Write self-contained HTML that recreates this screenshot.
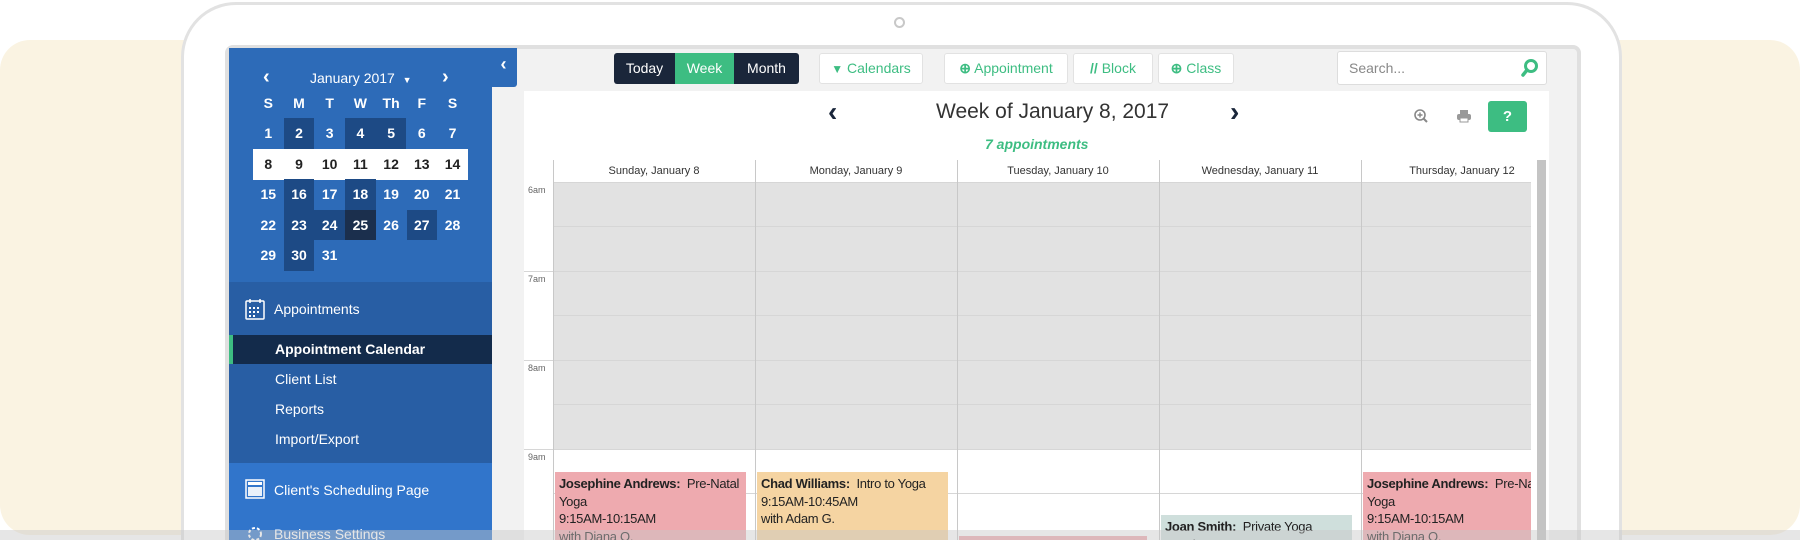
<!DOCTYPE html>
<html style="overflow:hidden;width:1800px;height:540px"><head><meta charset="utf-8"><style>
*{box-sizing:border-box;margin:0;padding:0}
html,body{width:1800px;height:540px;overflow:hidden}
body{background:#fff;font-family:"Liberation Sans",sans-serif;position:relative}
#wrap{position:absolute;left:0;top:0;width:1800px;height:540px;overflow:hidden}
.abs{position:absolute}
.cream{left:0;top:40px;width:1800px;height:495px;background:#faf3e2;border-radius:30px}
.laptop{left:181px;top:2px;width:1441px;height:538px;background:#fff;border:3px solid #e2e2e2;border-bottom:none;border-radius:55px 55px 0 0}
.cam{left:894px;top:17px;width:11px;height:11px;border:2px solid #c8c8c8;border-radius:50%}
.screen{left:225px;top:45px;width:1356px;height:495px;background:#f2f2f2;border:4px solid #e0e0e0;border-bottom:none;border-radius:8px 8px 0 0}
.side{left:229px;top:48px;width:263px;height:492px;background:#2d6bb8}
.tab{left:490px;top:48px;width:27px;height:39px;background:#2d6bb8;border-radius:0 0 3px 0;color:#fff;font-weight:bold;font-size:18px;text-align:center;line-height:32px}
.cell{position:absolute;width:30.6px;height:30.5px;color:#fff;font-weight:bold;font-size:14px;text-align:center;line-height:30px}
.dk{background:#1d4a85}
.dd{background:#1b2f4d}
.white{left:253px;top:149px;width:215px;height:31px;background:#fff}
.sect{left:229px;top:282px;width:263px;height:181px;background:#285ea4}
.sect2{left:229px;top:463px;width:263px;height:77px;background:#3175cb}
.nav{position:absolute;color:#fff;font-size:14px}
.btn{position:absolute;top:53px;height:31px;background:#fff;border:1px solid #e2e2e2;border-radius:3px;color:#3dbd82;font-size:14px;line-height:29px;text-align:center}
.panel{left:524px;top:91px;width:1025px;height:449px;background:#fff}
.hd{position:absolute;top:160px;font-size:11px;color:#333;text-align:center;width:202px;line-height:22px}
.ev{position:absolute;font-size:13px;letter-spacing:-0.3px;line-height:17.5px;color:#222;padding:3px 4px;overflow:hidden;white-space:nowrap}
.ev b{font-weight:bold}
</style></head><body><div id="wrap">
<div class="abs cream"></div>
<div class="abs laptop"></div>
<div class="abs cam"></div>
<div class="abs screen"></div>
<div class="abs side"></div>
<div class="abs tab">‹</div>
<div class="abs" style="left:263px;top:66px;color:#fff;font-size:20px;font-weight:bold">‹</div>
<div class="abs" style="left:442px;top:66px;color:#fff;font-size:20px;font-weight:bold">›</div>
<div class="abs" style="left:310px;top:70px;color:#fff;font-size:14px">January 2017 &nbsp;<span style="font-size:9px">▼</span></div>
<div class="abs white"></div>
<div id="cal"></div>
<div class="abs sect"></div>
<div class="abs sect2"></div>
<svg class="abs" style="left:245px;top:298px" width="20" height="22" viewBox="0 0 20 22"><rect x="1" y="3" width="18" height="18" fill="none" stroke="#fff" stroke-width="1.5" rx="1"/><line x1="5" y1="1" x2="5" y2="5" stroke="#fff" stroke-width="1.5"/><line x1="15" y1="1" x2="15" y2="5" stroke="#fff" stroke-width="1.5"/><g fill="#fff"><rect x="4" y="9" width="2" height="2"/><rect x="8" y="9" width="2" height="2"/><rect x="12" y="9" width="2" height="2"/><rect x="4" y="13" width="2" height="2"/><rect x="8" y="13" width="2" height="2"/><rect x="12" y="13" width="2" height="2"/><rect x="4" y="17" width="2" height="2"/><rect x="8" y="17" width="2" height="2"/></g></svg>
<div class="nav" style="left:274px;top:301px">Appointments</div>
<div class="abs" style="left:229px;top:335px;width:263px;height:29px;background:#132b4b;border-left:4px solid #3dbd82"></div>
<div class="nav" style="left:275px;top:341px;font-weight:bold">Appointment Calendar</div>
<div class="nav" style="left:275px;top:371px">Client List</div>
<div class="nav" style="left:275px;top:401px">Reports</div>
<div class="nav" style="left:275px;top:431px">Import/Export</div>
<svg class="abs" style="left:245px;top:479px" width="20" height="20" viewBox="0 0 20 20"><rect x="1" y="1" width="18" height="18" fill="none" stroke="#fff" stroke-width="1.5"/><rect x="3" y="3" width="14" height="3" fill="#fff"/><rect x="3" y="8" width="14" height="9" fill="#fff" opacity=".9"/></svg>
<div class="nav" style="left:274px;top:482px">Client's Scheduling Page</div>
<svg class="abs" style="left:245px;top:524px" width="20" height="16" viewBox="0 0 20 16"><circle cx="10" cy="10" r="6" fill="none" stroke="#fff" stroke-width="2" stroke-dasharray="3 2"/></svg>
<div class="nav" style="left:274px;top:526px;height:14px;overflow:hidden">Business Settings</div>
<div class="abs" style="left:614px;top:53px;width:185px;height:31px;background:#1a263a;border-radius:3px"></div>
<div class="abs" style="left:675px;top:53px;width:59px;height:31px;background:#3dbd82"></div>
<div class="abs" style="left:614px;top:53px;width:61px;line-height:31px;text-align:center;color:#fff;font-size:14px">Today</div>
<div class="abs" style="left:675px;top:53px;width:59px;line-height:31px;text-align:center;color:#fff;font-size:14px">Week</div>
<div class="abs" style="left:734px;top:53px;width:65px;line-height:31px;text-align:center;color:#fff;font-size:14px">Month</div>
<div class="btn" style="left:819px;width:104px"><b style="font-size:12px">▼</b> Calendars</div>
<div class="btn" style="left:944px;width:124px"><b>⊕</b> Appointment</div>
<div class="btn" style="left:1073px;width:80px"><b>//</b> Block</div>
<div class="btn" style="left:1158px;width:76px"><b>⊕</b> Class</div>
<div class="abs" style="left:1337px;top:51px;width:210px;height:34px;background:#fff;border:1px solid #ddd;border-radius:3px;color:#888;font-size:14px;line-height:32px;padding-left:11px">Search...</div>
<svg class="abs" style="left:1521px;top:58px" width="18" height="20" viewBox="0 0 18 20"><circle cx="10" cy="8" r="5.5" fill="none" stroke="#3dbd82" stroke-width="3"/><line x1="6" y1="12" x2="2" y2="17" stroke="#3dbd82" stroke-width="3.5" stroke-linecap="round"/></svg>
<div class="abs panel"></div>
<div class="abs" style="left:828px;top:96px;font-size:28px;color:#1a263a;font-weight:bold">‹</div>
<div class="abs" style="left:1230px;top:96px;font-size:28px;color:#1a263a;font-weight:bold">›</div>
<div class="abs" style="left:936px;top:100px;font-size:21px;color:#333">Week of January 8, 2017</div>
<div class="abs" style="left:985px;top:136px;font-size:14px;color:#3dbd82;font-style:italic;font-weight:bold">7 appointments</div>
<svg class="abs" style="left:1413px;top:108px" width="16" height="16" viewBox="0 0 16 16"><circle cx="7" cy="7" r="5" fill="none" stroke="#888" stroke-width="1.6"/><line x1="10.5" y1="10.5" x2="14" y2="14" stroke="#888" stroke-width="2"/><path d="M7 4.5v5M4.5 7h5" stroke="#888" stroke-width="1.4"/></svg>
<svg class="abs" style="left:1456px;top:109px" width="16" height="14" viewBox="0 0 16 14"><rect x="4" y="1" width="8" height="4" fill="#999"/><rect x="1" y="5" width="14" height="6" rx="2" fill="#999"/><rect x="4" y="9" width="8" height="4" fill="#fff" stroke="#999"/></svg>
<div class="abs" style="left:1488px;top:101px;width:39px;height:31px;background:#3dbd82;border-radius:3px;color:#fff;font-weight:bold;font-size:15px;text-align:center;line-height:31px">?</div>
<svg class="abs" style="left:524px;top:160px" width="1025" height="380">
<rect x="29" y="22" width="808" height="267" fill="#e2e2e2"/>
<rect x="837" y="22" width="170" height="267" fill="#e2e2e2"/>
<g stroke="#d6d6d6" stroke-width="1">
<line x1="29" y1="22.5" x2="1007" y2="22.5"/>
<line x1="29" y1="66.5" x2="1007" y2="66.5"/><line x1="29" y1="111.5" x2="1007" y2="111.5"/><line x1="29" y1="155.5" x2="1007" y2="155.5"/><line x1="29" y1="200.5" x2="1007" y2="200.5"/><line x1="29" y1="244.5" x2="1007" y2="244.5"/><line x1="29" y1="289.5" x2="1007" y2="289.5"/><line x1="29" y1="333.5" x2="1007" y2="333.5"/>
<line x1="0" y1="111.5" x2="29" y2="111.5"/><line x1="0" y1="200.5" x2="29" y2="200.5"/><line x1="0" y1="289.5" x2="29" y2="289.5"/>
</g>
<g stroke="#c8c8c8"><line x1="29.5" y1="0" x2="29.5" y2="380"/><line x1="231.5" y1="0" x2="231.5" y2="380"/><line x1="433.5" y1="0" x2="433.5" y2="380"/><line x1="635.5" y1="0" x2="635.5" y2="380"/><line x1="837.5" y1="0" x2="837.5" y2="380"/></g>
<rect x="1013" y="0" width="9" height="380" fill="#c4c4c4"/>
<g font-family="Liberation Sans" font-size="9" fill="#666"><text x="4" y="33">6am</text><text x="4" y="122">7am</text><text x="4" y="211">8am</text><text x="4" y="300">9am</text></g>
</svg>
<div class="hd" style="left:553px">Sunday, January 8</div>
<div class="hd" style="left:755px">Monday, January 9</div>
<div class="hd" style="left:957px">Tuesday, January 10</div>
<div class="hd" style="left:1159px">Wednesday, January 11</div>
<div class="hd" style="left:1361px">Thursday, January 12</div>
<div class="ev" style="left:555px;top:472px;width:191px;height:68px;background:#eeaaaf"><b>Josephine Andrews:</b>&nbsp; Pre-Natal<br>Yoga<br>9:15AM-10:15AM<br>with Diana O.</div>
<div class="ev" style="left:757px;top:472px;width:191px;height:68px;background:#f5d4a2"><b>Chad Williams:</b>&nbsp; Intro to Yoga<br>9:15AM-10:45AM<br>with Adam G.</div>
<div class="ev" style="left:1161px;top:515px;width:191px;height:25px;background:#cfdfdc"><b>Joan Smith:</b>&nbsp; Private Yoga<br>Session</div>
<div class="ev" style="left:1363px;top:472px;width:168px;height:68px;background:#eeaaaf"><b>Josephine Andrews:</b>&nbsp; Pre-Natal<br>Yoga<br>9:15AM-10:15AM<br>with Diana O.</div>
<div class="abs" style="left:959px;top:536px;width:188px;height:4px;background:#eeaaaf"></div>
<div class="abs" style="left:0;top:530px;width:1800px;height:10px;background:rgba(200,200,200,.45)"></div>
</div>
<script>
var c=document.getElementById('cal'),h='';
var names=['S','M','T','W','Th','F','S'];
for(var i=0;i<7;i++)h+='<div class="cell" style="left:'+(253+i*30.7)+'px;top:88px">'+names[i]+'</div>';
var dk={2:1,4:1,5:1,16:1,18:1,23:1,24:1,27:1,30:1},dd={25:1};
for(var d=1;d<=31;d++){var r=Math.floor((d-1)/7),col=(d-1)%7;var cls='cell'+(dk[d]?' dk':'')+(dd[d]?' dd':'');var st=r==1?'color:#222;':'';h+='<div class="'+cls+'" style="'+st+'left:'+(253+col*30.7)+'px;top:'+(118+r*30.6)+'px">'+d+'</div>';}
c.innerHTML=h;
</script>
</body></html>
